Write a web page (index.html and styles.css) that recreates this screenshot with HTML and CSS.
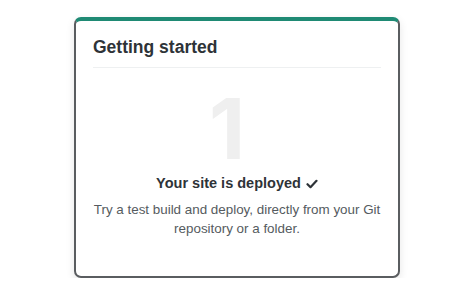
FILE: index.html
```html
<!DOCTYPE html>
<html>
<head>
<meta charset="utf-8">
<link rel="stylesheet" href="styles.css">
</head>
<body>
<div class="page">
  <section class="card">
    <header class="card-head">
      <h2 class="card-title">Getting started</h2>
    </header>
    <div class="step">
      <div class="step-num">1</div>
      <h3 class="step-title">Your site is deployed <svg class="check" width="12" height="10" viewBox="0 0 12 10"><path d="M1.5 5.2 L4.5 8.2 L10.5 1.8" fill="none" stroke="#2e3338" stroke-width="2.2" stroke-linecap="round" stroke-linejoin="round"/></svg></h3>
      <p class="step-text">Try a test build and deploy, directly from your Git repository or a folder.</p>
    </div>
  </section>
</div>
</body>
</html>
```
FILE: styles.css
```css
html, body {
  margin: 0;
  padding: 0;
  background: #ffffff;
}
.page {
  padding: 17px 0 0 74px;
  font-family: "Liberation Sans", Arial, sans-serif;
  color: #2e3338;
}
.card {
  box-sizing: border-box;
  width: 326px;
  height: 261px;
  border: 2px solid #5a5d60;
  border-top: 4px solid #1f8a74;
  border-radius: 7px;
  background: #fff;
  box-shadow: 0 3px 8px rgba(0,0,0,0.10);
  padding: 0 17px;
}
.card-head {
  border-bottom: 1px solid #eef0f1;
  padding: 16px 0 9px 0;
}
.card-title {
  margin: 0;
  font-size: 17.5px;
  font-weight: 700;
  line-height: 21px;
  color: #2e3338;
}
.step {
  display: flex;
  flex-direction: column;
  align-items: center;
  text-align: center;
}
.step-num {
  font-family: Inter, "Liberation Sans", sans-serif;
  font-size: 84px;
  font-weight: 700;
  line-height: 80px;
  color: #efefef;
  margin-top: 21px;
  margin-right: 20px;
}
.step-title {
  margin: 4px 0 0 0;
  font-size: 14.5px;
  font-weight: 700;
  line-height: 20px;
  color: #2e3338;
  display: flex;
  align-items: center;
  gap: 5px;
}
.check {
  margin-top: 2px;
}
.step-text {
  margin: 7px 0 0 0;
  font-size: 13.4px;
  line-height: 19px;
  color: #555b60;
}
```
